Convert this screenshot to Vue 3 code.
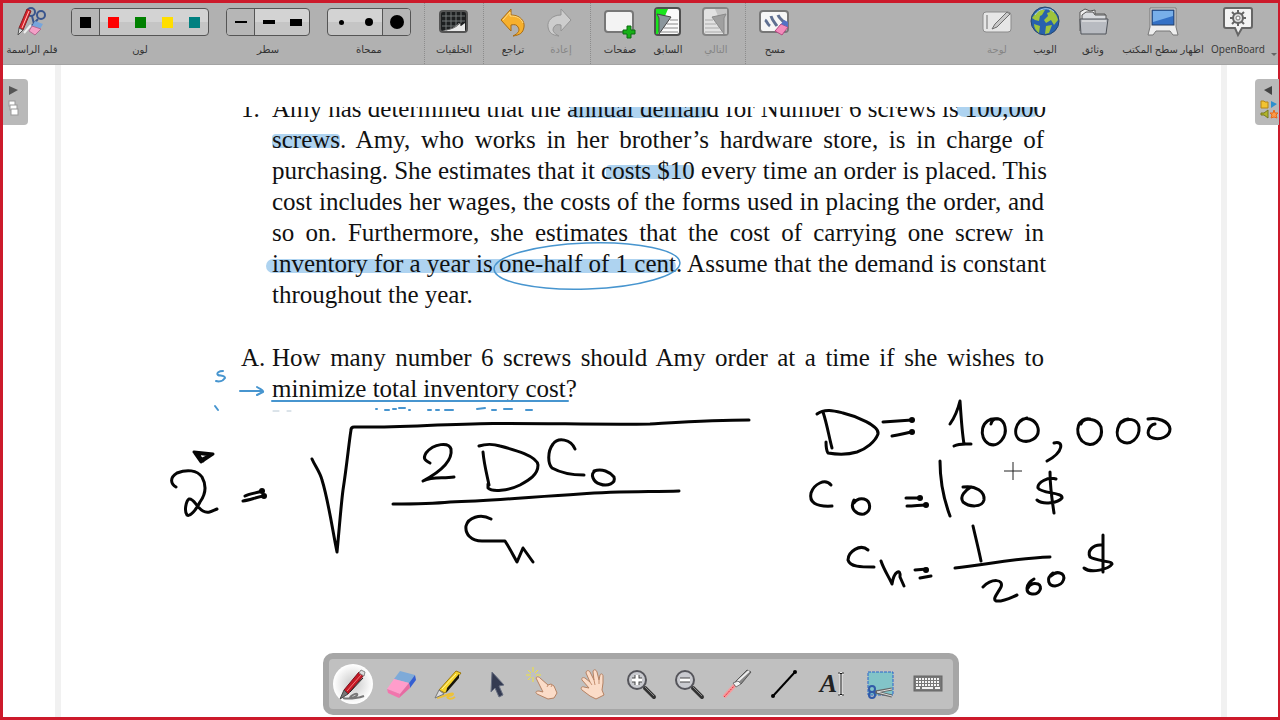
<script setup>
import { ref } from 'vue'

const colours = [
  { name: 'أسود', value: '#000000' },
  { name: 'أحمر', value: '#ff0000' },
  { name: 'أخضر', value: '#008000' },
  { name: 'أصفر', value: '#ffde00' },
  { name: 'أزرق', value: '#008080' },
]
const widths = ['thin', 'medium', 'thick']
const erasers = ['small', 'middle', 'large']

const colour = ref(0)
const width = ref(0)
const eraser = ref(2)
const tool = ref('pen')

const plus = '<path d="M22 18h4v4h4v4h-4v4h-4v-4h-4v-4h4z" fill="#16b016" stroke="#0a6a10" stroke-width="1"/>'

const pageGroups = [
  [
    {
      label: 'الخلفيات',
      icon: '<rect x="1" y="3" width="27" height="21" rx="3" fill="#1d1f20" stroke="#555" stroke-width="2"/><path d="M3 8h23M3 13h23M3 18h14M7 4v18M12 4v17M17 4v14M22 4v11" stroke="#727777" stroke-width="1" fill="none"/><path d="M3 23c8-1 14-4 17-8l2 3 4-3v8z" fill="#e9e9e9"/><path d="M7 22c6-1 11-3 14-7l1 3" fill="none" stroke="#666"/>',
    },
  ],
  [
    {
      label: 'تراجع',
      icon: '<path d="M3 12 13 1v6c9 0 14 6 13 12-1 6-4 8-11 9 6-3 7-6 5-9-1-2-3-3-7-2v6z" fill="#f7b02c" stroke="#a96a10" stroke-width="1"/><path d="M5 12l7-8v4c7 0 11 2 13 7" fill="none" stroke="#ffdc83" stroke-width="1"/>',
    },
    {
      label: 'إعادة',
      disabled: true,
      icon: '<path d="M25 12 15 1v6C6 7 1 13 2 19c1 6 4 8 11 9-6-3-7-6-5-9 1-2 3-3 7-2v6z" fill="#cdcdcd" stroke="#949494" stroke-width="1"/>',
    },
  ],
  [
    {
      label: 'صفحات',
      icon: '<rect x="0" y="3" width="28" height="21" rx="3" fill="#f3f3f3" stroke="#777" stroke-width="2"/>' + plus,
    },
    {
      label: 'السابق',
      icon: '<rect x="2" y="0" width="25" height="27" rx="3" fill="#fafafa" stroke="#4f4f4f" stroke-width="2"/><path d="M3 1h12l-3 7-7 18H3z" fill="#19e51d"/><path d="M6 26V10L4 6l14 3z" fill="#8b969c" stroke="#444" stroke-width="1"/><path d="M17 12h8M14 16h11M11 20h14M8 24h17" stroke="#888"/>',
    },
    {
      label: 'التالي',
      disabled: true,
      icon: '<rect x="2" y="0" width="25" height="27" rx="3" fill="#e2e2e2" stroke="#858585" stroke-width="2"/><path d="M26 1H14l3 7 7 18h2z" fill="#c5c5c5"/><path d="M23 26V10l2-4-14 3z" fill="#a0a0a0" stroke="#8a8a8a"/><path d="M4 12h8M4 16h11M4 20h14M4 24h17" stroke="#aaa"/>',
    },
  ],
  [
    {
      label: 'مسح',
      icon: '<rect x="0" y="3" width="28" height="21" rx="3" fill="#f6f6f6" stroke="#777" stroke-width="2"/><path d="M5 12c2 1 2 4 5 6M11 8c1 4 4 7 6 10M18 7c1 3 4 5 6 7" stroke="#5f6f91" stroke-width="3" fill="none"/><path d="m21 16 7 3-6 8-7-4z" fill="#f48bbb" stroke="#b34b83"/><path d="m24 12 4 2v5l-7-3z" fill="#5471c5"/>',
    },
  ],
]

const modes = [
  {
    label: 'لوحة',
    disabled: true,
    icon: '<rect x="1" y="4" width="28" height="20" rx="3" fill="#e6e6e6" stroke="#8b8b8b" stroke-width="1"/><path d="M5 7v14" stroke="#aaa" stroke-width="2"/><path d="m10 21 3-5L25 4l3 2-13 13z" fill="#c9c9c9" stroke="#6e6e6e"/>',
  },
  {
    label: 'الويب',
    icon: '<circle cx="15" cy="13" r="14" fill="#2861ad" stroke="#26466e"/><path d="M5 6c4-4 7-5 10-4l-3 5-2 1-1 5-4-1-3-2zM19 1c5 2 8 6 9 11l-4 5-3-5-5 3-2-3 4-4-1-3 3-1zM4 16l6 2-1 7c-3-2-5-5-5-9zM16 18l6-1-3 8-4 1z" fill="#9fc43b"/><path d="M5 7c3-6 13-9 19-3" stroke="#a8cff0" fill="none"/>',
  },
  {
    label: 'وثائق',
    icon: '<path d="M2 23V4l5-3 5 2 5-1v4h10v4" fill="#eee" stroke="#555"/><path d="M4 24V7l4-3h7l2 3h11v16z" fill="#d9dbdf" stroke="#555"/><path d="M2 11h28l-2 15H3z" fill="#b8bbc1" stroke="#50545b"/><path d="M4 13h24" stroke="#f1f1f1"/>',
  },
  {
    label: 'اظهار سطح المكتب',
    wide: true,
    icon: '<path d="M2 0h26v19l2 8h-5l-3-4H8l-3 4H0l2-8z" fill="#eee" stroke="#777" stroke-width="1"/><rect x="4" y="2" width="22" height="15" fill="#3370c5" stroke="#263c5e"/><path d="M5 3h20v5L5 14z" fill="#78afe9"/>',
  },
  {
    label: 'OpenBoard',
    brand: true,
    icon: '<path d="M3 0h24q2 0 2 2v16q0 2-2 2h-8l-4 7-3-7H3q-2 0-2-2V2q0-2 2-2z" fill="#f4f4f4" stroke="#666" stroke-width="2"/><path d="M15 2v16M7 10h16M9 4l12 12M21 4 9 16" stroke="#666" stroke-width="2"/><circle cx="15" cy="10" r="5" fill="#ddd" stroke="#666" stroke-width="2"/><circle cx="15" cy="10" r="2" fill="#fff" stroke="#777"/>',
  },
]

const lens = (sign) =>
  `<path d="m19 18 9 9" stroke="#333" stroke-width="4" stroke-linecap="round"/><path d="m19 17 9 9" stroke="#888" stroke-width="1"/><circle cx="11" cy="10" r="9" fill="#c9cacf" stroke="#55555b" stroke-width="2"/><path d="${sign}" stroke="#444" stroke-width="5"/><path d="${sign}" stroke="#fff" stroke-width="3"/>`

const tools = [
  {
    id: 'pen',
    label: 'قلم',
    icon: '<path d="M5 28c7 2 16-2 14-4-2-1-8 3-7 4s9 0 14-2" fill="none" stroke="#777" stroke-width="2"/><path d="m6 20 15-18 5 3L10 24z" fill="#c41824" stroke="#76101a"/><path d="m9 21 14-16" stroke="#f17a7c"/><path d="m6 20 4 4-8 5z" fill="#777" stroke="#444"/><path d="m21 3 2-3 4 2-1 4z" fill="#ddd" stroke="#888"/><path d="m12 22 13-14" stroke="#222"/>',
  },
  {
    id: 'eraser',
    label: 'ممحاة',
    icon: '<path d="m14 1 15 4-6 8-15-4z" fill="#7eaad8"/><path d="m29 5 1 5-6 8-1-5z" fill="#345fd2"/><path d="m8 9 15 4-9 11-13-5z" fill="#ff9dcb"/><path d="m1 19 13 5-1 4-11-5z" fill="#f275ad"/><path d="m23 13 1 5-11 10 1-4z" fill="#e76aa2"/>',
  },
  {
    id: 'marker',
    label: 'قلم تمييز',
    icon: '<path d="M3 28c8-2 16-6 16-4s-8 2-5 4 7-1 7-1" fill="none" stroke="#edc239" stroke-width="2"/><path d="M5 20 22 1l5 2-16 20z" fill="#f5d32b" stroke="#9a7810"/><path d="m13 18 12-14v4L12 23z" fill="#171509"/><path d="m5 20 5 4-9 4z" fill="#ddd" stroke="#777"/><path d="m8 19 14-15" stroke="#fff59a"/>',
  },
  { id: 'select', label: 'تحديد', icon: '<path d="m10 2 12 13-5 1 4 9-4 2-4-9-4 4z" fill="#343b52" stroke="#697082" stroke-width="1"/>' },
  {
    id: 'interact',
    label: 'تفاعل',
    icon: '<path d="M3-3v5M3 7v5M-4 5h5M6 5h5M-2 0l3 3M8 0 5 3M-2 10l3-3" stroke="#f0e33c" stroke-width="1"/><path d="M6 8c1-2 3-1 4 0l8 7 3-1 3 2 3 7-3 5-6 1-11-5c-2-2-1-3 2-3l4 1z" fill="#fbdcc8" stroke="#b58263"/><path d="m17 17 1-2m3 2 1-2" stroke="#c58f70"/>',
  },
  {
    id: 'hand',
    label: 'تحريك',
    icon: '<path d="m11 18-7-8c-1-2 1-3 3-2l5 4L8 3c0-3 3-3 4-1l4 8-1-8c0-3 3-3 4 0l2 8 1-5c1-2 3-1 3 1v7l-1 7 2 5-8 4-6-3-8-6c-2-2 0-4 2-3z" fill="#fbdcc8" stroke="#b58263"/><path d="m12 12 2 3m2-5 1 5m4-5v4" stroke="#c58f70" fill="none"/>',
  },
  { id: 'zoom-in', label: 'تكبير', icon: lens('M6 10h10M11 5v10') },
  { id: 'zoom-out', label: 'تصغير', icon: lens('M6 10h10') },
  {
    id: 'laser',
    label: 'مؤشر ليزر',
    icon: '<path d="m2 27 11-12" stroke="#f79a9c" stroke-width="4"/><path d="m2 27 11-12" stroke="#e02838" stroke-width="1" stroke-dasharray="2 1"/><path d="m13 12 12-12 4 2-10 12-6 1z" fill="#888" stroke="#555"/><path d="m15 12 12-11" stroke="#eee" stroke-width="2"/><path d="m11 13 5-2 3 3-5 3z" fill="#f2f2f2" stroke="#777"/>',
  },
  { id: 'line', label: 'خط', icon: '<path d="M3 26 25 2" stroke="#000" stroke-width="2"/><circle cx="3" cy="26" r="2" /><circle cx="25" cy="2" r="2"/>' },
  { id: 'text', label: 'نص', text: 'A' },
  {
    id: 'capture',
    label: 'التقاط',
    icon: '<rect x="2" y="2" width="25" height="23" fill="#82c4c8" stroke="#2864cb" stroke-width="1" stroke-dasharray="3 1"/><path d="m9 22 17-3M9 22l17 4" stroke="#666" stroke-width="3"/><path d="m11 22 15-3M11 22l15 4" stroke="#ddd"/><circle cx="6" cy="19" r="3" fill="none" stroke="#315aa8" stroke-width="2"/><circle cx="6" cy="25" r="3" fill="none" stroke="#315aa8" stroke-width="2"/>',
  },
  {
    id: 'keyboard',
    label: 'لوحة المفاتيح',
    icon: '<rect x="0" y="6" width="28" height="15" fill="#777" stroke="#666"/><path d="M2 9h24M2 12h24M2 15h24" stroke="#f5f5f5" stroke-width="2" stroke-dasharray="2 1"/><path d="M2 18h4M8 18h11M21 18h5" stroke="#f5f5f5" stroke-width="2"/>',
  },
]

/* Pen strokes, in page coordinates */
const strokes = [
  'M194 452 213 454 201 462 194 452 M198 453 202 461 208 455 203 461 M196 453 211 455 202 459',
  'M176 487C171 484 169 478 177 473C187 469 197 470 202 477C207 486 205 495 200 502C196 510 190 517 187 515C184 511 186 501 189 499C194 498 196 507 203 511C208 514 212 511 217 509',
  'M245 496C249 494 256 493 262 491M243 501C250 500 257 497 264 496',
  'M312 459C315 466 320 472 322 480C328 499 332 527 337 552C339 532 341 505 343 490C347 464 349 442 351 430Q351 427 354 427C395 428 440 424 493 423.5C545 423 600 425 650 424C685 422 715 420 749 420',
  'M430 463C424 460 423 458 426 453C434 443 449 442 451 449C453 462 438 473 423 481C433 476 443 479 454 477',
  'M483 452C484 464 487 475 489 485M479 446C485 444 494 444 500 446C515 450 537 456 538 465C538 475 529 480 520 485C508 491 492 492 488 488L488 484',
  'M575 449C571 439 558 437 553 444C547 452 548 464 552 468C561 473 573 475 584 475',
  'M594 471C602 468 610 472 614 477C616 483 608 487 600 484C593 482 590 474 595 471',
  'M393 504C415 504 430 504 450 502C490 501 530 497 580 494C620 491 650 492 679 491',
  'M491 519C480 513 468 518 466 526C465 534 471 541 482 541L505 541C509 547 513 555 517 562L523 548L533 562',
  'M823 412C827 424 829 437 832 448M817 414C825 408 835 411 843 413C856 416 880 426 878 434C875 442 866 449 857 452C847 455 834 454 828 453C826 450 826 446 826 442',
  'M883 422 912 420M892 436C900 435 906 433 912 432',
  'M950 424C955 417 958 409 960 401C961 416 962 432 964 444M954 446C960 443 966 444 971 444',
  'M998 419C980 416 978 439 989 444C999 448 1007 436 1005 427C1003 417 993 416 991 424',
  'M1027 418C1014 421 1013 436 1020 440C1029 444 1040 438 1038 428C1036 419 1025 416 1020 421',
  'M1054 443C1064 440 1064 452 1047 461',
  'M1090 419C1078 417 1074 431 1082 441C1092 450 1104 440 1101 427C1098 419 1084 416 1081 424',
  'M1128 419C1117 420 1114 436 1121 441C1130 447 1140 438 1139 427C1137 418 1127 418 1122 422',
  'M1148 419C1157 417 1169 421 1170 429C1170 437 1160 440 1153 438C1144 436 1149 425 1155 424',
  'M831 485C825 478 814 484 811 493C809 502 815 507 832 506',
  'M854 500C849 509 857 515 864 514C872 511 871 501 864 499C859 498 856 500 854 503',
  'M906 498H920M907 506C914 506 920 505 926 505',
  'M940 461C940 480 944 500 950 516',
  'M963 487C976 485 985 492 984 500C982 508 969 507 963 502C959 496 966 490 971 487',
  'M1056 479C1048 476 1037 483 1038 488C1042 494 1063 492 1062 498C1058 503 1043 505 1037 500M1050 472C1050 485 1052 500 1054 513',
  'M868 550C860 543 848 552 848 560C850 567 861 567 874 567',
  'M881 561C884 570 889 577 892 584C894 571 901 568 900 577L904 586',
  'M915 570 927 569M920 578 931 576',
  'M973 526C976 539 979 551 981 561M955 568C985 565 1015 558 1050 557',
  'M983 587C992 578 1004 579 1001 587C998 593 992 599 996 601C1003 602 1010 598 1017 595',
  'M1034 579C1025 584 1025 593 1032 594C1040 595 1043 586 1038 584C1034 583 1030 584 1028 588',
  'M1053 573C1045 579 1049 586 1055 586C1064 585 1067 575 1060 573C1057 572 1054 573 1051 576',
  'M1102 545C1093 544 1087 551 1090 557C1096 561 1112 561 1112 564C1109 569 1091 574 1084 568M1103 535V572',
]
const dots = [[262, 491], [264, 496], [912, 420], [912, 432], [920, 498], [926, 505], [926, 570]]
</script>

<template>
  <div class="app">
    <header class="bar" dir="ltr">
      <button class="item stylus" type="button">
        <svg class="icon" viewBox="0 0 30 28" aria-hidden="true">
          <circle cx="14" cy="4" r="4" fill="none" stroke="#39558d" stroke-width="2" />
          <circle cx="24" cy="7" r="4" fill="none" stroke="#39558d" stroke-width="2" />
          <path d="m15 8 2 8M21 11l-7 8" stroke="#39558d" stroke-width="2" />
          <path d="m2 20 8-19 4 2-8 19z" fill="#d9222a" stroke="#872026" />
          <path d="m5 20 7-17" stroke="#ffc0bc" />
          <path d="m2 20 4 2-5 5z" fill="#ddd" stroke="#555" />
          <path d="m18 13 8 3-3 5-8-3z" fill="#77a5dc" />
          <path d="m15 18 9 3-6 6-6-4z" fill="#f4a0c7" stroke="#b46b91" />
          <path d="m7 25 7-8" stroke="#eee" stroke-width="2" />
        </svg>
        <span class="caption" dir="rtl">قلم الراسمة</span>
      </button>

      <div class="field colours" role="group" aria-labelledby="cap-colour">
        <div class="segments">
          <button
            v-for="(c, i) in colours"
            :key="c.name"
            type="button"
            class="segment"
            :class="{ on: colour === i }"
            :aria-label="c.name"
            :aria-pressed="colour === i"
            @click="colour = i"
          >
            <span class="swatch" :style="{ background: c.value }"></span>
          </button>
        </div>
        <span id="cap-colour" class="caption" dir="rtl">لون</span>
      </div>

      <div class="field" role="group" aria-labelledby="cap-line">
        <div class="segments">
          <button
            v-for="(w, i) in widths"
            :key="w"
            type="button"
            class="segment"
            :class="{ on: width === i }"
            :aria-label="'سطر ' + (i + 1)"
            :aria-pressed="width === i"
            @click="width = i"
          >
            <span class="dash" :class="w"></span>
          </button>
        </div>
        <span id="cap-line" class="caption" dir="rtl">سطر</span>
      </div>

      <div class="field" role="group" aria-labelledby="cap-eraser">
        <div class="segments">
          <button
            v-for="(e, i) in erasers"
            :key="e"
            type="button"
            class="segment"
            :class="{ on: eraser === i }"
            :aria-label="'ممحاة ' + (i + 1)"
            :aria-pressed="eraser === i"
            @click="eraser = i"
          >
            <span class="dot" :class="e"></span>
          </button>
        </div>
        <span id="cap-eraser" class="caption" dir="rtl">ممحاة</span>
      </div>

      <div class="groups">
        <div v-for="(group, g) in pageGroups" :key="g" class="group">
          <button v-for="b in group" :key="b.label" type="button" class="item" :disabled="b.disabled">
            <svg class="icon" viewBox="0 0 30 28" aria-hidden="true" v-html="b.icon"></svg>
            <span class="caption" dir="rtl">{{ b.label }}</span>
          </button>
        </div>
      </div>

      <nav class="modes">
        <button
          v-for="m in modes"
          :key="m.label"
          type="button"
          class="item"
          :class="{ wide: m.wide, brand: m.brand }"
          :disabled="m.disabled"
        >
          <svg class="icon" viewBox="0 0 30 28" aria-hidden="true" v-html="m.icon"></svg>
          <span class="caption" dir="auto">{{ m.label }}</span>
        </button>
        <span class="more" aria-hidden="true"></span>
      </nav>
    </header>

    <main class="board">
      <aside class="side">
        <button class="tab left" type="button" aria-label="الصفحات">
          <svg width="18" height="40" viewBox="0 0 18 40" aria-hidden="true">
            <path d="m4 4 9 4-9 5z" fill="#555" />
            <g fill="#fff" stroke="#999">
              <rect x="4" y="19" width="6" height="5" />
              <rect x="5" y="23" width="7" height="5" />
              <rect x="6" y="27" width="7" height="6" />
            </g>
          </svg>
        </button>
      </aside>

      <section class="page">
        <div class="sheet">
          <svg class="layer" viewBox="61 65 1160 652" aria-hidden="true">
            <g fill="#aed3f0">
              <path d="M570 107h139v4q0 7-7 7H577q-7 0-7-7z" />
              <path d="M957 107h81v4q0 6-6 6h-67q-8 0-8-7z" />
              <rect x="272" y="134" width="68" height="14" rx="4" />
              <rect x="606" y="165" width="87" height="14" rx="4" />
              <rect x="266" y="259" width="410" height="14" rx="7" />
            </g>
          </svg>

          <article class="doc" lang="en">
            <div class="entry first">
              <span class="mark">1.</span>
              <div class="lines">
                <p>Amy has determined that the annual demand for Number 6 screws is 100,000</p>
                <p>screws. Amy, who works in her brother’s hardware store, is in charge of</p>
                <p>purchasing. She estimates that it costs $10 every time an order is placed. This</p>
                <p>cost includes her wages, the costs of the forms used in placing the order, and</p>
                <p>so on. Furthermore, she estimates that the cost of carrying one screw in</p>
                <p>inventory for a year is one-half of 1 cent. Assume that the demand is constant</p>
                <p class="last">throughout the year.</p>
              </div>
            </div>
            <div class="entry">
              <span class="mark">A.</span>
              <div class="lines">
                <p>How many number 6 screws should Amy order at a time if she wishes to</p>
                <p class="last">minimize total inventory cost?</p>
              </div>
            </div>
          </article>

          <svg class="layer" viewBox="61 65 1160 652" role="img" aria-label="Handwritten notes">
            <g fill="none" stroke="#4795cf" stroke-width="2" stroke-linecap="round">
              <ellipse cx="587" cy="266" rx="93" ry="23" stroke-width="1.5" transform="rotate(-2 587 266)" />
              <path d="M272 401H568M240 391H262M257 387C260 389 264 390 263 392L257 395" />
              <path d="M223 371C219 371 216 373 218 375C220 376 225 375 225 378C223 381 219 382 216 381M215 406l3 4" />
              <path d="M376 409h1M385 410h4M393 409h3M399 408h6M409 410h1M428 410h3M436 410h3M445 410h8M477 409l8-1M492 410h4M504 409h8M526 410h6" />
              <path d="M273 411h6M287 411h4" stroke="#b8c8d4" stroke-width="1" />
            </g>
            <g fill="none" stroke="#050505" stroke-width="3" stroke-linecap="round" stroke-linejoin="round">
              <path v-for="(d, i) in strokes" :key="i" :d="d" />
            </g>
            <g fill="#050505">
              <circle v-for="([x, y], i) in dots" :key="i" :cx="x" :cy="y" r="3" />
            </g>
            <path d="M1013 462v18M1004 471h18" stroke="#222" stroke-width="1" />
          </svg>
        </div>
      </section>

      <aside class="side end">
        <button class="tab right" type="button" aria-label="المكتبة">
          <svg width="24" height="40" viewBox="0 0 24 40" aria-hidden="true">
            <path d="M17 4 9 8l8 5z" fill="#444" />
            <path d="M6 19h3l1 1h3v6H6z" fill="#f2c332" stroke="#b78617" />
            <path d="m16 19 6 3-6 4z" fill="#2c8fce" />
            <path d="M6 31h3l4-3v8l-4-3H6z" fill="#b2b52b" stroke="#77781d" />
            <path d="m19 28 1 3h3l-2 2 1 3-3-1-3 1 1-3-2-2h3z" fill="#fc9b47" stroke="#e56b17" />
          </svg>
        </button>
      </aside>

      <div class="dock" role="toolbar" aria-label="الأدوات">
        <button
          v-for="t in tools"
          :key="t.id"
          type="button"
          class="tool"
          :class="{ on: tool === t.id }"
          :aria-label="t.label"
          :aria-pressed="tool === t.id"
          @click="tool = t.id"
        >
          <span class="disc">
            <span v-if="t.text" class="letter">
              {{ t.text }}
              <svg width="8" height="24" viewBox="0 0 8 24" aria-hidden="true">
                <path d="M1 1h2l1 1 1-1h2M4 2v20M1 23h2l1-1 1 1h2" fill="none" stroke="#eee" stroke-width="3" />
                <path d="M1 1h2l1 1 1-1h2M4 2v20M1 23h2l1-1 1 1h2" fill="none" stroke="#111" />
              </svg>
            </span>
            <svg v-else class="icon" viewBox="0 0 30 28" aria-hidden="true" v-html="t.icon"></svg>
          </span>
        </button>
      </div>
    </main>
  </div>
</template>

<style>
html,
body {
  background: #fff;
}
</style>

<style scoped>
.app {
  box-sizing: border-box;
  min-height: 100vh;
  display: flex;
  flex-direction: column;
  border: 3px solid #cc1a2b;
  border-right-width: 2px;
  background: #fff;
  font-family: "Open Sans", "DejaVu Sans", sans-serif;
  color: #333;
}

button {
  margin: 0;
  padding: 0;
  border: 0;
  background: none;
  color: inherit;
  font: inherit;
}

.bar {
  display: flex;
  height: 62px;
  box-sizing: border-box;
  background: #b1b1b1;
  border-bottom: 1px solid #a4a4a4;
}

.item,
.field {
  display: flex;
  flex-direction: column;
  align-items: center;
  gap: 6px;
  padding-top: 5px;
  flex: none;
}

.item {
  width: 48px;
  justify-content: flex-start;
}

.item.stylus,
.item.brand {
  width: 58px;
}

.item.wide {
  width: 92px;
}

.item:disabled {
  color: #858585;
}

.icon {
  display: block;
  width: 30px;
  height: 28px;
  overflow: visible;
}

.caption {
  font-size: 10px;
  line-height: 14px;
  white-space: nowrap;
}

.field {
  width: 84px;
  margin-right: 17px;
}

.field.colours {
  width: 138px;
  margin-left: 10px;
}

.segments {
  display: flex;
  align-self: stretch;
  height: 28px;
  box-sizing: border-box;
  border: 1px solid #555;
  border-radius: 4px;
  overflow: hidden;
  background: linear-gradient(#d3d3d3 0 50%, #c5c5c5 50% 100%);
}

.segment {
  flex: 1;
  display: flex;
  align-items: center;
  justify-content: center;
}

.segment.on {
  background: #b6b6b6;
}

.segment.on:first-child {
  border-right: 1px solid #555;
}

.segment.on:last-child {
  border-left: 1px solid #555;
}

.swatch {
  width: 11px;
  height: 11px;
}

.dash {
  width: 12px;
  background: #000;
}

.thin {
  height: 2px;
}

.medium {
  height: 4px;
}

.thick {
  height: 7px;
}

.dot {
  border-radius: 50%;
  background: #000;
}

.small {
  width: 5px;
  height: 5px;
}

.middle {
  width: 8px;
  height: 8px;
}

.large {
  width: 14px;
  height: 14px;
}

.groups {
  display: flex;
  margin-left: -4px;
}

.group {
  display: flex;
  padding: 0 5px;
  border-left: 1px dotted #8c8c8c;
}

.modes {
  display: flex;
  margin-left: auto;
}

.more {
  align-self: flex-end;
  margin: 0 1px 8px 4px;
  border: 3px solid transparent;
  border-top-color: #666;
  border-bottom: 0;
}

.board {
  position: relative;
  flex: 1;
  display: flex;
}

.side {
  width: 52px;
  flex: none;
  padding-top: 14px;
}

.side.end {
  display: flex;
  align-items: flex-start;
  justify-content: flex-end;
}

.tab {
  display: flex;
  align-items: center;
  height: 46px;
  background: #b9b9b9;
}

.tab.left {
  width: 25px;
  padding-left: 2px;
  border-radius: 0 4px 4px 0;
}

.tab.right {
  width: 24px;
  border-radius: 4px 0 0 4px;
}

.page {
  flex: 1;
  border: 0 solid #f1f1f1;
  border-width: 0 6px;
}

.sheet {
  position: relative;
  width: 1160px;
  height: 100%;
  margin: 0 auto;
}

.layer {
  position: absolute;
  top: 0;
  left: 0;
  width: 1160px;
  height: 652px;
}

.doc {
  position: relative;
  display: flex;
  flex-direction: column;
  gap: 32px;
  margin-left: 154px;
  width: 845px;
  padding-top: 28px;
  clip-path: inset(42px 0 0 0);
  font-family: "Liberation Serif", serif;
  font-size: 25px;
  line-height: 31px;
  color: #111;
}

.entry {
  display: flex;
}

.mark {
  width: 31px;
  margin-left: 26px;
  flex: none;
}

.lines {
  width: 772px;
}

.lines p {
  margin: 0;
  white-space: nowrap;
  text-align: justify;
  text-align-last: justify;
}

.lines .last {
  text-align-last: left;
}

.dock {
  position: absolute;
  bottom: 2px;
  left: 50%;
  transform: translateX(-50%);
  display: flex;
  border: 6px solid #a6a6a6;
  border-radius: 10px;
  background: #c0c0c0;
}

.tool {
  width: 48px;
  height: 50px;
  display: flex;
  align-items: center;
  justify-content: center;
}

.disc {
  display: flex;
  align-items: center;
  justify-content: center;
  width: 40px;
  height: 40px;
  border-radius: 50%;
}

.tool.on .disc {
  background: radial-gradient(#d8d8d8 20%, #ffffff 70%);
}

.letter {
  display: flex;
  align-items: center;
  font: italic bold 26px/28px "Liberation Serif", serif;
  color: #222;
}
</style>
